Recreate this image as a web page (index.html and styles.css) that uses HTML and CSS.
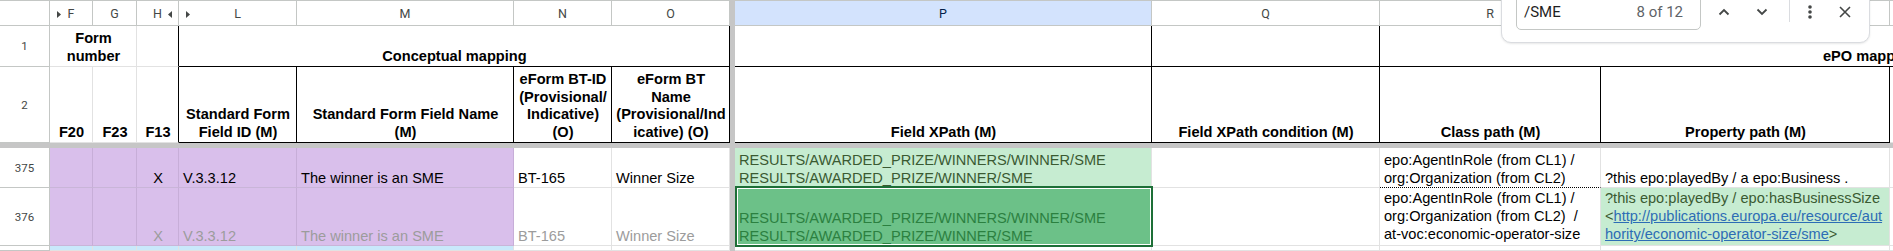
FILE: index.html
```html
<!DOCTYPE html>
<html>

	<head>
		<meta charset="UTF-8">
		<title>Mapping sheet</title>
		<link rel="stylesheet" href="styles.css">
	</head>

	<body>
		<div class="page">
			<div class="sheet">
				<div class="freeze-v"></div>
				<div class="freeze-h"></div>

				<!-- column letters -->
				<div class="ch"></div>
				<div class="ch"><svg class="tri tri-left" width="4" height="7" viewBox="0 0 4 7"><polygon points="0,0 4,3.5 0,7" /></svg>F</div>
				<div class="ch">G</div>
				<div class="ch">H<svg class="tri tri-right" width="4" height="7" viewBox="0 0 4 7"><polygon points="4,0 0,3.5 4,7" /></svg></div>
				<div class="ch"><svg class="tri tri-left" width="4" height="7" viewBox="0 0 4 7"><polygon points="0,0 4,3.5 0,7" /></svg>L</div>
				<div class="ch">M</div>
				<div class="ch">N</div>
				<div class="ch">O</div>
				<div class="ch sel">P</div>
				<div class="ch">Q</div>
				<div class="ch">R</div>
				<div class="ch"></div>
				<div class="ch"></div>

				<!-- row 1 -->
				<div class="rn">1</div>
				<div class="c hd span2">Form<br>number</div>
				<div class="c bk-r"></div>
				<div class="c hd span4 bk-r bk-b">Conceptual mapping</div>
				<div class="c bk-r bk-b"></div>
				<div class="c bk-r bk-b"></div>
				<div class="c hd span3 bk-b epo">ePO mapping</div>

				<!-- row 2 -->
				<div class="rn">2</div>
				<div class="c hd">F20</div>
				<div class="c hd">F23</div>
				<div class="c hd bk-r">F13</div>
				<div class="c hd bk-r bk-b">Standard Form<br>Field ID (M)</div>
				<div class="c hd bk-r bk-b">Standard Form Field Name<br>(M)</div>
				<div class="c hd bk-r bk-b">eForm BT-ID<br>(Provisional/<br>Indicative)<br>(O)</div>
				<div class="c hd bk-r bk-b">eForm BT<br>Name<br>(Provisional/Ind<br>icative) (O)</div>
				<div class="c hd bk-r bk-b">Field XPath (M)</div>
				<div class="c hd bk-r bk-b">Field XPath condition (M)</div>
				<div class="c hd bk-r bk-b">Class path (M)</div>
				<div class="c hd bk-r bk-b">Property path (M)</div>
				<div class="c"></div>

				<!-- row 375 -->
				<div class="rn">375</div>
				<div class="c pu"></div>
				<div class="c pu"></div>
				<div class="c pu ctr">X</div>
				<div class="c pu">V.3.3.12</div>
				<div class="c pu">The winner is an SME</div>
				<div class="c">BT-165</div>
				<div class="c">Winner Size</div>
				<div class="c mint">RESULTS/AWARDED_PRIZE/WINNERS/WINNER/SME<br>RESULTS/AWARDED_PRIZE/WINNER/SME</div>
				<div class="c"></div>
				<div class="c dot-b">epo:AgentInRole (from CL1) /<br>org:Organization (from CL2)</div>
				<div class="c">?this epo:playedBy / a epo:Business .</div>
				<div class="c"></div>

				<!-- row 376 -->
				<div class="rn">376</div>
				<div class="c pu"></div>
				<div class="c pu"></div>
				<div class="c pu ctr dim">X</div>
				<div class="c pu dim">V.3.3.12</div>
				<div class="c pu dim">The winner is an SME</div>
				<div class="c dim">BT-165</div>
				<div class="c dim">Winner Size</div>
				<div class="c green active">RESULTS/AWARDED_PRIZE/WINNERS/WINNER/SME<br>RESULTS/AWARDED_PRIZE/WINNER/SME</div>
				<div class="c"></div>
				<div class="c top">epo:AgentInRole (from CL1) /<br>org:Organization (from CL2)&nbsp; /<br>at-voc:economic-operator-size</div>
				<div class="c mint top">
					<div>?this epo:playedBy / epo:hasBusinessSize<br>&lt;<a href="#">http://publications.europa.eu/resource/aut<br>hority/economic-operator-size/sme</a>&gt;</div>
				</div>
				<div class="c"></div>

				<!-- row 377 -->
				<div class="rn"></div>
				<div class="c blue"></div>
				<div class="c blue"></div>
				<div class="c blue"></div>
				<div class="c blue"></div>
				<div class="c blue"></div>
				<div class="c"></div>
				<div class="c"></div>
				<div class="c"></div>
				<div class="c"></div>
				<div class="c"></div>
				<div class="c"></div>
				<div class="c"></div>
			</div>

			<div class="find">
				<div class="find-input">
					<span class="find-text">/SME</span>
					<span class="find-count">8 of 12</span>
				</div>
				<span class="find-btn">
					<svg width="12" height="8" viewBox="0 0 12 8"><path d="M1.5 6.5 L6 2 L10.5 6.5" fill="none" stroke="#444746" stroke-width="1.8" /></svg>
				</span>
				<span class="find-btn">
					<svg width="12" height="8" viewBox="0 0 12 8"><path d="M1.5 1.5 L6 6 L10.5 1.5" fill="none" stroke="#444746" stroke-width="1.8" /></svg>
				</span>
				<span class="find-sep"></span>
				<span class="find-btn kebab">
					<svg width="4" height="14" viewBox="0 0 4 14"><circle cx="2" cy="2" r="1.8" /><circle cx="2" cy="7" r="1.8" /><circle cx="2" cy="12" r="1.8" /></svg>
				</span>
				<span class="find-btn close">
					<svg width="12" height="12" viewBox="0 0 12 12"><path d="M1 1 L11 11 M11 1 L1 11" stroke="#444746" stroke-width="1.6" /></svg>
				</span>
			</div>
		</div>
	</body>

</html>
```

FILE: styles.css
```css
* {
	box-sizing: border-box;
}

body {
	margin: 0;
	font-family: "Liberation Sans", Arial, sans-serif;
	font-size: 14.6px;
	color: #000;
	background: #fff;
}

.page {
	position: relative;
	width: 1893px;
	height: 251px;
	overflow: hidden;
}

.sheet {
	display: grid;
	grid-template-columns: 50px 43px 44px 42px 118px 217px 98px 118px 5px 417px 228px 221px 289px 1fr;
	grid-template-rows: 26px 41px 76px 5px 40px 58px 1fr;
	width: 1893px;
	height: 251px;
}

.freeze-v {
	grid-column: 9;
	grid-row: 1 / -1;
	background: #c6c6c6;
}

.freeze-h {
	grid-column: 1 / -1;
	grid-row: 4;
	background: #c6c6c6;
}

/* column letters */
.ch {
	position: relative;
	display: flex;
	align-items: center;
	justify-content: center;
	font-family: Roboto, "Liberation Sans", sans-serif;
	font-size: 12.5px;
	color: #444746;
	border-top: 1px solid #c4c7c5;
	border-right: 1px solid #c4c7c5;
	border-bottom: 1px solid #c4c7c5;
	background: #fff;
}

.ch.sel {
	background: #d3e3fd;
	color: #041e49;
}

.tri {
	position: absolute;
	top: 10px;
	fill: #444746;
}

.tri-left {
	left: 7px;
}

.tri-right {
	right: 6px;
}

/* row numbers */
.rn {
	display: flex;
	align-items: center;
	justify-content: center;
	font-family: Roboto, "Liberation Sans", sans-serif;
	font-size: 11.5px;
	color: #444746;
	border-right: 1px solid #c4c7c5;
	border-bottom: 1px solid #c4c7c5;
	background: #fff;
}

/* cells */
.c {
	display: flex;
	flex-direction: column;
	justify-content: flex-end;
	padding: 0 3px 0 4px;
	line-height: 18px;
	white-space: nowrap;
	overflow: hidden;
	border-right: 1px solid #e2e2e2;
	border-bottom: 1px solid #e2e2e2;
}

.c.top {
	padding-bottom: 2px;
}

.hd {
	font-weight: bold;
	text-align: center;
	line-height: 17.5px;
	padding-bottom: 1px;
}

.span2 {
	grid-column: span 2;
}

.span3 {
	grid-column: span 3;
}

.span4 {
	grid-column: span 4;
}

.epo {
	text-align: left;
	padding-left: 443px;
}

.bk-r {
	border-right-color: #000;
}

.bk-b {
	border-bottom-color: #000;
}

.dot-b {
	border-bottom: 1px dotted #000;
}

.ctr {
	text-align: center;
}

.pu {
	background: #d9bfeb;
	border-right-color: #c7aed8;
	border-bottom-color: #c9b5d8;
}

.dim {
	color: #9c9c9c;
}

.mint {
	background: #c6ecd1;
	color: #3a5a32;
}

.green {
	background: #6cc188;
	color: #2b8040;
}

.blue {
	background: #c9e8fb;
}

.c a {
	color: #2d6db5;
	text-decoration: underline;
}

.active {
	position: relative;
	overflow: visible;
}

.active::after {
	content: "";
	position: absolute;
	top: -2px;
	left: 0;
	right: -2px;
	bottom: -2px;
	border: 2px solid #1d6f37;
	box-shadow: inset 0 0 0 1px #fff;
}

/* find bar */
.find {
	position: absolute;
	top: -19px;
	left: 1501px;
	width: 369px;
	height: 62px;
	display: flex;
	align-items: center;
	padding-left: 14px;
	background: #fff;
	border: 1px solid #dadce0;
	border-radius: 10px;
	box-shadow: 0 1px 2px rgba(60, 64, 67, 0.12);
	font-family: Roboto, "Liberation Sans", sans-serif;
	z-index: 5;
}

.find-input {
	display: flex;
	align-items: center;
	justify-content: space-between;
	width: 185px;
	height: 36px;
	padding: 0 17px 0 7px;
	border: 1px solid #c4c7c5;
	border-radius: 5px;
	font-size: 15px;
	margin-right: 4px;
}

.find-text {
	color: #1f1f1f;
}

.find-count {
	color: #5f6368;
}

.find-btn {
	display: flex;
	align-items: center;
	justify-content: center;
	width: 38px;
	height: 24px;
}

.find-sep {
	width: 1px;
	height: 26px;
	margin: 0 0 6px 8px;
	background: #dadce0;
}

.find-btn.kebab {
	width: 40px;
	fill: #444746;
}

.find-btn.close {
	width: 30px;
}
```
